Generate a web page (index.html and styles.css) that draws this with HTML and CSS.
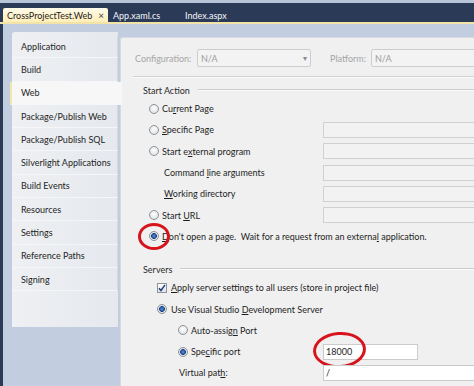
FILE: index.html
```html
<!DOCTYPE html>
<html lang="en">
<head>
    <meta charset="UTF-8">
    <title>CrossProjectTest.Web - Web</title>
    <link rel="stylesheet" href="styles.css">
</head>
<body>
    <div class="doc-tabs">
        <div class="doc-tab active">CrossProjectTest.Web <span class="tab-close">×</span></div>
        <div class="doc-tab">App.xaml.cs</div>
        <div class="doc-tab">Index.aspx</div>
    </div>

    <div class="workspace">
        <nav class="side-nav">
            <div class="nav-item">Application</div>
            <div class="nav-item">Build</div>
            <div class="nav-item active">Web</div>
            <div class="nav-item">Package/Publish Web</div>
            <div class="nav-item">Package/Publish SQL</div>
            <div class="nav-item">Silverlight Applications</div>
            <div class="nav-item">Build Events</div>
            <div class="nav-item">Resources</div>
            <div class="nav-item">Settings</div>
            <div class="nav-item">Reference Paths</div>
            <div class="nav-item">Signing</div>
            <div class="nav-tail"></div>
        </nav>

        <main class="props">
            <div class="config-row">
                <span class="config-label">Configuration:</span>
                <div class="select-box">N/A <span class="select-arrow">▾</span></div>
                <span class="config-label platform">Platform:</span>
                <div class="select-box wide">N/A</div>
            </div>
            <div class="divider"></div>

            <div class="section-head">
                <span>Start Action</span>
                <span class="head-line"></span>
            </div>
            <div class="opt-row">
                <label class="opt"><span class="radio"></span><span>Cu<u>r</u>rent Page</span></label>
            </div>
            <div class="opt-row">
                <label class="opt"><span class="radio"></span><span><u>S</u>pecific Page</span></label>
                <div class="text-box"></div>
            </div>
            <div class="opt-row">
                <label class="opt"><span class="radio"></span><span>Start e<u>x</u>ternal program</span></label>
                <div class="text-box"></div>
            </div>
            <div class="opt-row">
                <label class="opt sub"><span>Command <u>l</u>ine arguments</span></label>
                <div class="text-box"></div>
            </div>
            <div class="opt-row">
                <label class="opt sub"><span><u>W</u>orking directory</span></label>
                <div class="text-box"></div>
            </div>
            <div class="opt-row">
                <label class="opt"><span class="radio"></span><span>Start <u>U</u>RL</span></label>
                <div class="text-box"></div>
            </div>
            <div class="opt-row">
                <label class="opt full"><span class="radio on"><span class="mark mark-radio"></span></span><span><u>D</u>on't open a page.&nbsp; Wait for a request from an externa<u>l</u> application.</span></label>
            </div>

            <div class="section-head servers">
                <span>Servers</span>
                <span class="head-line"></span>
            </div>
            <div class="opt-row">
                <label class="opt full lvl1">
                    <span class="checkbox">
                        <svg width="8" height="8" viewBox="0 0 8 8"><polyline points="1,4.2 3,6.5 7,0.8" fill="none" stroke="#1d3b78" stroke-width="1.4"/></svg>
                    </span>
                    <span><u>A</u>pply server settings to all users (store in project file)</span>
                </label>
            </div>
            <div class="opt-row">
                <label class="opt full lvl1"><span class="radio on"></span><span>Use Visual Studio <u>D</u>evelopment Server</span></label>
            </div>
            <div class="opt-row">
                <label class="opt lvl2"><span class="radio"></span><span>Auto-assig<u>n</u> Port</span></label>
            </div>
            <div class="opt-row">
                <label class="opt lvl2"><span class="radio on"></span><span>Spe<u>c</u>ific port</span></label>
                <div class="text-box port">18000<span class="mark mark-port"></span></div>
            </div>
            <div class="opt-row">
                <label class="opt sub lvl2"><span>Virtual pat<u>h</u>:</span></label>
                <div class="text-box live">/</div>
            </div>
        </main>
    </div>
</body>
</html>
```

FILE: styles.css
```css
body {
    margin: 0;
    width: 474px;
    height: 386px;
    overflow: hidden;
    font-family: Lato, "Open Sans", sans-serif;
    font-size: 9px;
    color: #1e1e1e;
    background-color: #c2cee0;
}

/* document tabs */
.doc-tabs {
    display: flex;
    align-items: flex-end;
    height: 19px;
    padding-left: 3px;
    background-color: #2b3a57;
    border-top: 3px solid #b8c4d7;
    border-bottom: 2px solid #f2e4a8;
}
.doc-tab {
    display: flex;
    align-items: center;
    height: 14px;
    padding: 0 20px 0 5px;
    color: #f4f6fa;
}
.doc-tab.active {
    width: 105px;
    box-sizing: border-box;
    padding: 0 4px 0 4px;
    justify-content: space-between;
    color: #1e1e1e;
    background: linear-gradient(#fffbea, #ffeeb8);
    border-radius: 2px 2px 0 0;
}
.tab-close {
    font-size: 10px;
    color: #444;
}

/* workspace */
.workspace {
    display: flex;
    align-items: flex-start;
    height: 362px;
    border-left: 3px solid #2b3a57;
    padding: 8px 0 0 9px;
    box-sizing: border-box;
}

.side-nav {
    display: flex;
    flex-direction: column;
    width: 106px;
    flex: none;
    padding-top: 3px;
    background: linear-gradient(to right, #eef0f3, #e5e8ed);
    border-top-left-radius: 3px;
}
.nav-item {
    display: flex;
    align-items: center;
    height: 23.3px;
    box-sizing: border-box;
    padding-left: 9px;
    background: linear-gradient(to right, #eef0f3, #e5e8ed);
    border-bottom: 1px solid #f5f6f8;
    border-right: 1px solid #d4d9e1;
}
.nav-item.active {
    position: relative;
    z-index: 1;
    margin-left: -2px;
    margin-right: -4px;
    padding-left: 9px;
    background: #f7f7f7;
    border-left: 2px solid #f3e6a9;
    border-right: none;
}
.nav-tail {
    height: 36px;
    background: linear-gradient(to right, #eef0f3, #e5e8ed);
    clip-path: polygon(0 0, 100% 0, 100% 100%, 0 9%);
}

/* property page */
.props {
    flex: 1;
    height: 349px;
    margin: 5px 0 0 2px;
    padding: 11px 0 0 12px;
    box-sizing: border-box;
    background-color: #f0f0f0;
    border-left: 1px solid #d6dbe3;
    border-top: 1px solid #d6dbe3;
    border-top-left-radius: 3px;
    overflow: hidden;
}

.config-row {
    display: flex;
    align-items: center;
    height: 18px;
    padding-left: 2px;
}
.config-label {
    width: 62px;
    flex: none;
    color: #a6a6a6;
}
.config-label.platform {
    width: 41px;
    margin-left: 19px;
}
.select-box {
    display: flex;
    align-items: center;
    justify-content: space-between;
    width: 114px;
    height: 18px;
    box-sizing: border-box;
    padding: 0 3px;
    color: #9d9d9d;
    background-color: #f3f3f3;
    border: 1px solid #cdcdcd;
    border-radius: 2px;
}
.select-box.wide {
    flex: 1;
    margin-right: -6px;
}
.select-arrow {
    font-size: 8px;
    color: #8a8a8a;
}

.divider {
    margin-top: 9px;
    border-top: 1px solid #cfd2d6;
    border-bottom: 1px solid #fbfbfb;
}

.section-head {
    display: flex;
    align-items: center;
    height: 16px;
    margin-top: 4px;
    padding-left: 10px;
    color: #2a2a2a;
}
.section-head.servers {
    margin-top: 14px;
}
.head-line {
    flex: 1;
    margin-left: 8px;
    border-top: 1px solid #c9ccd1;
    border-bottom: 1px solid #fbfbfb;
}

.opt-row {
    display: grid;
    grid-template-columns: 190px 1fr;
    align-items: center;
    height: 21.3px;
}
.opt {
    display: flex;
    align-items: center;
    gap: 3px;
    padding-left: 16px;
    white-space: nowrap;
}
.opt.full {
    grid-column: 1 / 3;
}
.opt.sub {
    padding-left: 31px;
}
.opt.lvl1 {
    padding-left: 24px;
    gap: 4px;
}
.opt.lvl2 {
    padding-left: 45px;
    gap: 3px;
}
.opt.sub.lvl2 {
    padding-left: 46px;
}

.radio {
    position: relative;
    width: 10px;
    height: 10px;
    flex: none;
    box-sizing: border-box;
    border: 1px solid #8e9399;
    border-radius: 50%;
    background: radial-gradient(circle at 50% 40%, #ffffff, #d6d9dd);
}
.radio.on {
    background: radial-gradient(circle, #5b8fd6 0, #2a5aa6 2px, #1f3f7c 2.6px, #e4e7eb 3.2px);
}
.checkbox {
    display: flex;
    align-items: center;
    justify-content: center;
    width: 10px;
    height: 10px;
    flex: none;
    box-sizing: border-box;
    border: 1px solid #8e9399;
    background: linear-gradient(#fdfdfd, #dfe2e6);
}

.text-box {
    position: relative;
    width: calc(100% + 6px);
    height: 16px;
    box-sizing: border-box;
    padding-left: 2px;
    line-height: 14px;
    background-color: #f2f2f2;
    border: 1px solid #d0d0d0;
}
.text-box.port {
    width: 95px;
    background-color: #ffffff;
    border-color: #cbcbcb;
}
.text-box.live {
    background-color: #ffffff;
    border-color: #cbcbcb;
}

/* red annotation rings */
.mark {
    position: absolute;
    box-sizing: border-box;
    border: 3px solid #d7131c;
    border-radius: 50%;
}
.mark-radio {
    left: -12px;
    top: -9px;
    width: 32px;
    height: 27px;
}
.mark-port {
    left: -11px;
    top: -13px;
    width: 53px;
    height: 36px;
    transform: rotate(-4deg);
}
```
